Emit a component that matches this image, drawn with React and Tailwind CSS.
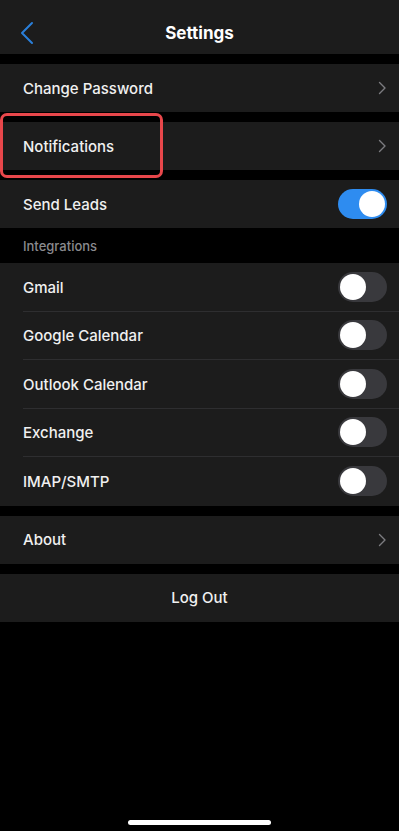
import React, { useState } from "react";

function Chevron() {
  return (
    <svg width="9" height="14" viewBox="0 0 9 14" fill="none">
      <path d="M1.5 1.5L7 7l-5.5 5.5" stroke="#7c7c80" strokeWidth="1.4" strokeLinecap="round" strokeLinejoin="round" />
    </svg>
  );
}

function Toggle({ on }) {
  return (
    <div
      className={
        "w-[49px] h-[30px] rounded-full p-[2px] flex items-center " +
        (on ? "bg-[#2e8cf0] justify-end" : "bg-[#39393d] justify-start")
      }
    >
      <div className="w-[26px] h-[26px] rounded-full bg-white" />
    </div>
  );
}

function Row({ label, right, divider, tall }) {
  return (
    <div className={(tall ? "h-[48.5px]" : "h-[48px]") + " flex items-center pl-[23px] bg-[#1c1c1c]"}>
      <div
        className={
          "flex-1 h-full flex items-center justify-between pr-[12px] " +
          (divider ? "border-b border-[#2e2e30]" : "")
        }
      >
        <span className="pt-[2px] text-[15px] font-medium text-[#f0f0f0]">{label}</span>
        {right}
      </div>
    </div>
  );
}

export default function App() {
  const [integrations] = useState(["Gmail", "Google Calendar", "Outlook Calendar", "Exchange", "IMAP/SMTP"]);

  return (
    <div className="min-h-[831px] bg-black flex flex-col" style={{ fontFamily: "Inter, 'Noto Sans', sans-serif" }}>
      <div className="h-[54px] bg-[#1c1c1c] flex items-center relative">
        <div className="absolute left-[20px] top-[21px]">
          <svg width="14" height="24" viewBox="0 0 14 24" fill="none">
            <path d="M12 2L2 12l10 10" stroke="#2a7fd9" strokeWidth="2" strokeLinecap="round" strokeLinejoin="round" />
          </svg>
        </div>
        <div className="w-full text-center pt-[14px] text-[17px] font-bold text-white">Settings</div>
      </div>

      <div className="h-[10px]" />
      <Row label="Change Password" right={<Chevron />} />
      <div className="h-[10px]" />
      <div className="relative">
        <Row label="Notifications" right={<Chevron />} />
        <div className="absolute left-0 top-[-9px] w-[163px] h-[65px] border-[3px] border-[#e8474b] rounded-[7px]" />
      </div>
      <div className="h-[10px]" />
      <Row label="Send Leads" right={<Toggle on />} />

      <div className="h-[35px] flex items-center pl-[23px] pt-[2px]">
        <span className="text-[13px] font-medium text-[#8a8a8e]">Integrations</span>
      </div>

      {integrations.map((name, i) => (
        <Row key={name} label={name} right={<Toggle on={false} />} divider={i < integrations.length - 1} tall />
      ))}

      <div className="h-[10px]" />
      <Row label="About" right={<Chevron />} />
      <div className="h-[10px]" />
      <div className="h-[48px] bg-[#1c1c1c] flex items-center justify-center">
        <span className="pt-[2px] text-[15px] font-medium text-[#f0f0f0]">Log Out</span>
      </div>

      <div className="flex-1 flex items-end justify-center pb-[6px]">
        <div className="w-[143px] h-[5px] rounded-full bg-white" />
      </div>
    </div>
  );
}
